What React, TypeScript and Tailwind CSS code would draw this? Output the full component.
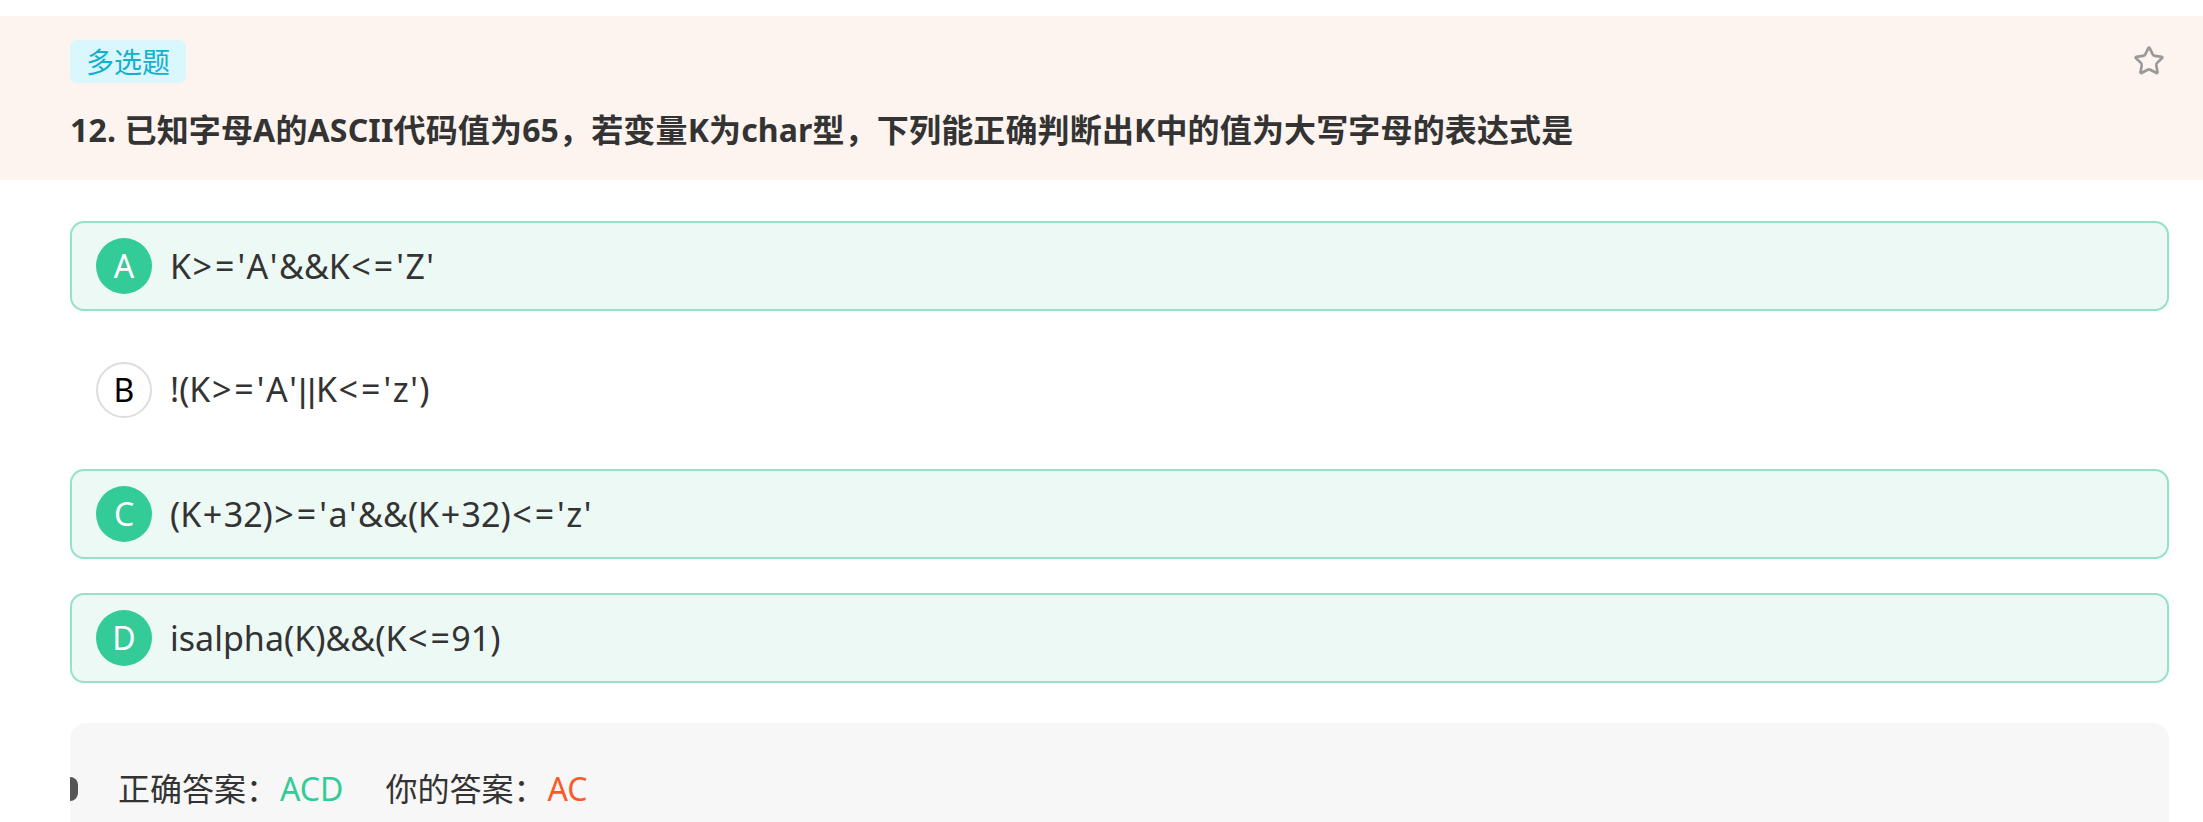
import React from "react";
import { Star } from "lucide-react";

const font = { fontFamily: '"Noto Sans", "Noto Sans CJK SC", sans-serif' };

type Opt = { key: string; text: string; selected: boolean };

const options: Opt[] = [
  { key: "A", text: "K>='A'&&K<='Z'", selected: true },
  { key: "B", text: "!(K>='A'||K<='z')", selected: false },
  { key: "C", text: "(K+32)>='a'&&(K+32)<='z'", selected: true },
  { key: "D", text: "isalpha(K)&&(K<=91)", selected: true },
];

const WIDE = "<>='+";

function Expr({ text }: { text: string }) {
  return (
    <>
      {text.split("").map((c, i) =>
        WIDE.includes(c) ? (
          <span key={i} className="mx-[1.5px]">
            {c}
          </span>
        ) : c === "|" ? (
          <span key={i} className="font-['Liberation_Sans',sans-serif]">
            {c}
          </span>
        ) : (
          <span key={i}>{c}</span>
        )
      )}
    </>
  );
}

function OptionRow({ o }: { o: Opt }) {
  return (
    <div
      className={
        o.selected
          ? "flex h-[90px] items-center gap-[18px] rounded-[14px] border-2 border-[#95e2c8] bg-[#ecf9f5] pl-[24px]"
          : "flex h-[90px] items-center gap-[18px] rounded-[14px] border-2 border-transparent bg-white pl-[24px]"
      }
    >
      <div
        className={
          o.selected
            ? "flex h-[56px] w-[56px] shrink-0 items-center justify-center rounded-full bg-[#33cb98] text-[32px] text-white"
            : "flex h-[56px] w-[56px] shrink-0 items-center justify-center rounded-full border-2 border-[#dddddd] bg-white text-[32px] text-black"
        }
      >
        {o.key}
      </div>
      <div className="text-[34px] text-[#333333]">
        <Expr text={o.text} />
      </div>
    </div>
  );
}

export default function App() {
  return (
    <div className="min-h-screen bg-white pt-[16px]" style={font}>
      <div className="flex h-[164px] flex-col bg-[#fdf3ef] pl-[70px] pr-[38px] pt-[24px]">
        <div className="flex items-start justify-between">
          <div className="flex h-[43px] items-center rounded-[7px] bg-[#d9f7fc] px-[16px] text-[28px] text-[#14afd0]">
            多选题
          </div>
          <Star className="mt-[5px] h-[32px] w-[32px] text-[#999999]" strokeWidth={2} />
        </div>
        <div className="mt-[23px] text-[32px] font-bold leading-[48px] tracking-[0.15px] text-[#333333]">
          12. 已知字母A的ASCII代码值为65，若变量K为char型，下列能正确判断出K中的值为大写字母的表达式是
        </div>
      </div>

      <div className="flex flex-col gap-[34px] pl-[70px] pr-[34px] pt-[41px]">
        {options.map((o) => (
          <OptionRow key={o.key} o={o} />
        ))}
      </div>

      <div className="ml-[70px] mr-[34px] mt-[40px] rounded-[16px] bg-[#f7f7f7] pb-[48px] pt-[48px]">
        <div className="flex items-center">
          <div className="h-[24px] w-[8px] rounded-r-full bg-[#555555]" />
          <div className="ml-[40px] flex items-center text-[32px] leading-[36px] text-[#333333]">
            <span>正确答案：</span>
            <span className="ml-[2px] text-[#33cb98]">ACD</span>
            <span className="ml-[42px]">你的答案：</span>
            <span className="ml-[2px] text-[#fa5a28]">AC</span>
          </div>
        </div>
      </div>
    </div>
  );
}
